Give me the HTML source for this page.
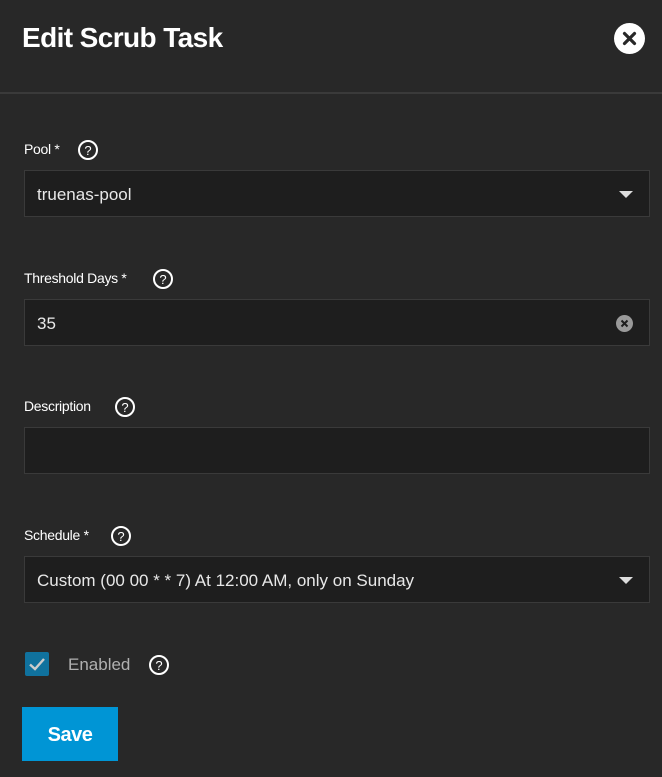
<!DOCTYPE html>
<html><head><style>
body{margin:0;width:662px;height:777px;background:#282828;font-family:"Liberation Sans",sans-serif;overflow:hidden;position:relative;color:#fff}
.hdr{position:absolute;left:0;top:0;width:662px;height:92px;background:#282828;border-bottom:2px solid #3a3a3a}
h1{position:absolute;left:22px;top:22px;margin:0;font-size:28px;font-weight:bold;letter-spacing:-0.6px}
.close{position:absolute;left:614px;top:23px;width:31px;height:31px;border-radius:50%;background:#fff}
.lbl{position:absolute;left:24px;font-size:14px;color:#fff;letter-spacing:-0.3px}
.q{position:absolute;width:16px;height:16px;border:2px solid #fff;border-radius:50%;font-size:13px;font-weight:normal;text-align:center;line-height:17px}
.inp{position:absolute;left:24px;width:624px;height:45px;background:#1e1e1e;border:1px solid #3a3a3a;font-size:17px;color:#e8e8e8;line-height:47px;box-sizing:content-box}
.inp span{margin-left:12px}
.arr{position:absolute;right:16px;top:20px;width:0;height:0;border-left:7px solid transparent;border-right:7px solid transparent;border-top:7px solid #ddd}
</style></head><body>
<div class="hdr"></div>
<h1>Edit Scrub Task</h1>
<div class="close"><svg width="31" height="31"><path d="M10.5 10.5L20.5 20.5M20.5 10.5L10.5 20.5" stroke="#282828" stroke-width="3.2" stroke-linecap="round"/></svg></div>

<div class="lbl" style="top:141px">Pool *</div><div class="q" style="left:78px;top:140px">?</div>
<div class="inp" style="top:170px"><span>truenas-pool</span><div class="arr"></div></div>

<div class="lbl" style="top:270px">Threshold Days *</div><div class="q" style="left:153px;top:269px">?</div>
<div class="inp" style="top:299px"><span>35</span><svg style="position:absolute;right:16px;top:15px" width="17" height="17"><circle cx="8.5" cy="8.5" r="8.5" fill="#9a9a9a"/><path d="M5.5 5.5L11.5 11.5M11.5 5.5L5.5 11.5" stroke="#1e1e1e" stroke-width="2"/></svg></div>

<div class="lbl" style="top:398px">Description</div><div class="q" style="left:115px;top:397px">?</div>
<div class="inp" style="top:427px"></div>

<div class="lbl" style="top:527px">Schedule *</div><div class="q" style="left:111px;top:526px">?</div>
<div class="inp" style="top:556px"><span>Custom (00 00 * * 7) At 12:00 AM, only on Sunday</span><div class="arr"></div></div>

<div style="position:absolute;left:25px;top:652px;width:24px;height:24px;background:#10729e;border-radius:2px"><svg width="24" height="24"><path d="M5 12.5L10 17L19 7" stroke="#ccc" stroke-width="2.4" fill="none"/></svg></div>
<div style="position:absolute;left:68px;top:655px;font-size:17px;color:#b0b0b0">Enabled</div>
<div class="q" style="left:149px;top:655px">?</div>

<div style="position:absolute;left:22px;top:707px;width:96px;height:54px;background:#0095d5;font-weight:bold;font-size:20px;text-align:center;line-height:57px;letter-spacing:-0.5px">Save</div>
</body></html>
